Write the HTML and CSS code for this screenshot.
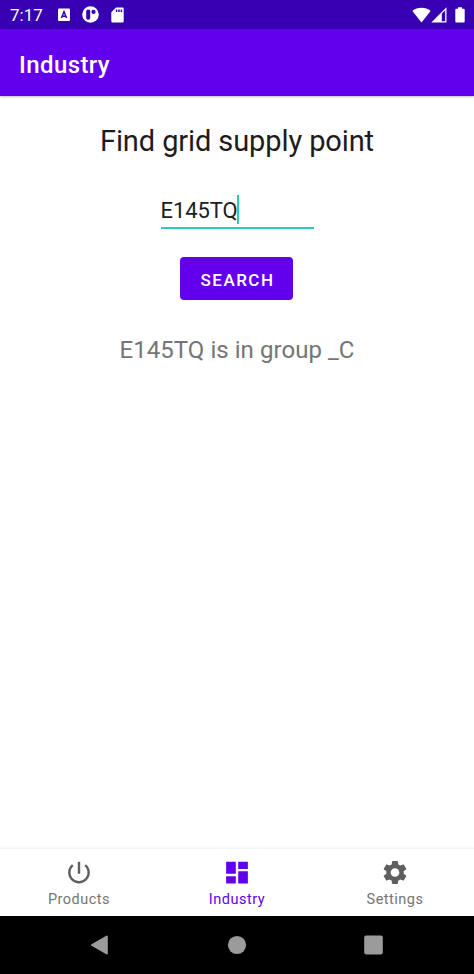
FILE: index.html
```html
<!DOCTYPE html>
<html lang="en">
<head>
  <meta charset="UTF-8">
  <meta name="viewport" content="width=device-width, initial-scale=1.0">
  <title>Industry</title>
  <link rel="stylesheet" href="styles.css">
</head>
<body>
  <div class="screen">
    <div class="status-bar">
      <span class="time">7:17</span>
      <svg class="status-keyboard" width="12" height="13" viewBox="0 0 12 13">
        <rect y=".5" width="12" height="12.5" rx="1" fill="#fff"/>
        <path d="M3.400 10L6 3.800l2.600 6.200M4.200 8.200h3.600" fill="none" stroke="#3700b3" stroke-width="1.500"/>
      </svg>
      <svg class="status-app" width="17" height="17" viewBox="0 0 17 17">
        <circle cx="8.500" cy="8.500" r="8.300" fill="#fff"/>
        <rect x="4.200" y="3.500" width="4" height="10.300" rx="1.800" fill="#3700b3"/>
        <circle cx="11.500" cy="5.900" r="2.100" fill="#3700b3"/>
      </svg>
      <svg class="status-card" width="13" height="16" viewBox="0 0 13 16">
        <path d="M5 .5h6.500a1.200 1.200 0 0 1 1.200 1.200v12.600a1.200 1.200 0 0 1-1.200 1.200h-10a1.200 1.200 0 0 1-1.200-1.200V5.200z" fill="#fff"/>
        <path d="M5.600 2.500v2.600M8 2.500v2.600M10.400 2.500v2.600" stroke="#3700b3" stroke-width="1.500"/>
      </svg>
      <div class="status-right">
        <svg width="19" height="16" viewBox="0 0 19 16">
          <path d="M9.500 15.500L.4 4C2.800 1.900 6 .8 9.500 .8s6.700 1.100 9.100 3.200z" fill="#fff"/>
        </svg>
        <svg class="signal" width="16" height="16" viewBox="0 0 16 16">
          <path d="M15.500 .3v15.200H.3z" fill="#fff"/>
          <path d="M10.800 6.700L14.200 3.300v10.900h-3.400z" fill="#3700b3"/>
        </svg>
        <svg class="battery" width="10" height="16" viewBox="0 0 10 16">
          <path d="M3 .3h4v1.500h1.700a1 1 0 0 1 1 1v11.700a1 1 0 0 1-1 1H1.300a1 1 0 0 1-1-1V2.800a1 1 0 0 1 1-1H3z" fill="#fff"/>
        </svg>
      </div>
    </div>

    <header class="app-bar">
      <h1>Industry</h1>
    </header>

    <main class="content">
      <h2>Find grid supply point</h2>
      <div class="postcode"><span>E145TQ</span><i class="caret"></i></div>
      <button class="search">SEARCH</button>
      <p class="result">E145TQ is in group _C</p>
    </main>

    <nav class="tabs">
      <a class="tab">
        <svg class="tab-icon" viewBox="0 0 24 24">
          <path d="M13 3h-2v10h2V3zm4.830 2.170l-1.420 1.420C17.990 7.860 19 9.810 19 12c0 3.870-3.130 7-7 7s-7-3.130-7-7c0-2.190 1.010-4.140 2.580-5.420L6.170 5.170C4.230 6.820 3 9.260 3 12c0 4.970 4.030 9 9 9s9-4.030 9-9c0-2.740-1.230-5.180-3.170-6.830z"/>
        </svg>
        <span>Products</span>
      </a>
      <a class="tab active">
        <svg class="tab-icon" viewBox="0 0 24 24">
          <path d="M3 13h8V3H3v10zm0 8h8v-6H3v6zm10 0h8V11h-8v10zm0-18v6h8V3h-8z"/>
        </svg>
        <span>Industry</span>
      </a>
      <a class="tab">
        <svg class="tab-icon" viewBox="0 0 24 24">
          <path d="M19.140 12.940c.04-.3.060-.61.060-.94 0-.32-.02-.64-.07-.94l2.030-1.580c.18-.14.230-.41.120-.61l-1.920-3.320c-.12-.22-.37-.29-.59-.22l-2.390.96c-.5-.38-1.030-.7-1.620-.94l-.36-2.540c-.04-.24-.24-.41-.48-.41h-3.840c-.24 0-.43.170-.47.410l-.36 2.540c-.59.240-1.130.570-1.620.940l-2.390-.96c-.22-.08-.47 0-.59.220L2.740 8.870c-.12.210-.08.470.120.610l2.030 1.580c-.05.3-.09.630-.09.940s.02.640.070.940l-2.030 1.580c-.18.140-.23.410-.12.610l1.920 3.320c.12.220.370.290.590.220l2.390-.96c.5.380 1.030.7 1.620.940l.36 2.540c.05.240.240.410.480.410h3.840c.24 0 .44-.17.470-.41l.36-2.540c.59-.24 1.130-.56 1.620-.94l2.390.960c.22.080.470 0 .59-.22l1.920-3.320c.12-.22.070-.47-.12-.61l-2.010-1.580zM12 15.600c-1.980 0-3.600-1.620-3.600-3.600s1.620-3.600 3.600-3.600 3.600 1.620 3.600 3.600-1.620 3.600-3.600 3.600z"/>
        </svg>
        <span>Settings</span>
      </a>
    </nav>

    <div class="system-nav">
      <svg width="20" height="22" viewBox="0 0 20 22"><path d="M16.800 2.500v17L2 11z" fill="#9b9b9b" stroke="#9b9b9b" stroke-width="2" stroke-linejoin="round"/></svg>
      <svg width="20" height="20" viewBox="0 0 20 20"><circle cx="10" cy="10" r="9.100" fill="#9b9b9b"/></svg>
      <svg width="20" height="20" viewBox="0 0 20 20"><rect x=".2" y=".6" width="18.600" height="18.800" rx="1.800" fill="#9b9b9b"/></svg>
    </div>
  </div>
</body>
</html>
```

FILE: styles.css
```css
* {
  box-sizing: border-box;
}

body {
  margin: 0;
  font-family: Roboto, sans-serif;
  background-color: #fff;
  color: #1c1c1c;
}

svg {
  display: block;
  flex-shrink: 0;
}

h1, h2, p {
  margin: 0;
}

.screen {
  display: flex;
  flex-direction: column;
  height: 974px;
  overflow: hidden;
}

.status-bar {
  display: flex;
  align-items: center;
  height: 29px;
  padding: 0 9px 0 10px;
  background-color: #3700b3;
  color: #fff;
}

.time {
  width: 48px;
  font-size: 17px;
  line-height: 29px;
  padding-top: 1px;
}

.status-app {
  margin-left: 12px;
}

.status-card {
  margin-left: 12px;
}

.status-right {
  display: flex;
  align-items: center;
  margin-left: auto;
}

.battery {
  margin-left: 8px;
}

.app-bar {
  display: flex;
  align-items: center;
  height: 67px;
  padding: 4px 0 0 19px;
  background-color: #6200ee;
  color: #fff;
  box-shadow: 0 1px 2px rgba(0, 0, 0, 0.25);
}

.app-bar h1 {
  font-size: 24px;
  font-weight: 500;
  letter-spacing: 0.4px;
}

.content {
  flex: 1;
  display: flex;
  flex-direction: column;
  align-items: center;
}

.content h2 {
  margin-top: 28px;
  font-size: 29px;
  font-weight: 400;
  line-height: 34px;
  letter-spacing: -0.1px;
}

.postcode {
  display: flex;
  align-items: center;
  width: 153px;
  height: 35px;
  margin-top: 36px;
  border-bottom: 2px solid #2accb8;
  font-size: 22px;
}

.postcode span {
  letter-spacing: -0.1px;
}

.caret {
  width: 2px;
  height: 29px;
  margin-top: -2px;
  background-color: #2accb8;
}

.search {
  width: 113px;
  height: 43px;
  margin: 28px 1px 0 0;
  padding: 2px 0 0 2px;
  border: none;
  border-radius: 4px;
  background-color: #6200ee;
  color: #fff;
  font-family: inherit;
  font-size: 17px;
  font-weight: 500;
  letter-spacing: 1.5px;
}

.result {
  margin-top: 36px;
  font-size: 24px;
  line-height: 28px;
  letter-spacing: 0.05px;
  color: #757575;
}

.tabs {
  display: flex;
  height: 68px;
  border-top: 1px solid #f5f5f5;
  box-shadow: 0 -1px 2px rgba(0, 0, 0, 0.04);
}

.tab {
  flex: 1;
  display: flex;
  flex-direction: column;
  align-items: center;
  padding-top: 9px;
  font-size: 14.5px;
  line-height: 17px;
  letter-spacing: 0.5px;
  color: #757575;
}

.tab span {
  margin-top: 4px;
}

.tab-icon {
  width: 30px;
  height: 29px;
  fill: #5f5f5f;
}

.active {
  color: #6200ee;
}

.active .tab-icon {
  fill: #6200ee;
}

.system-nav {
  display: flex;
  align-items: center;
  justify-content: center;
  gap: 117px;
  height: 58px;
  background-color: #000;
}
```
